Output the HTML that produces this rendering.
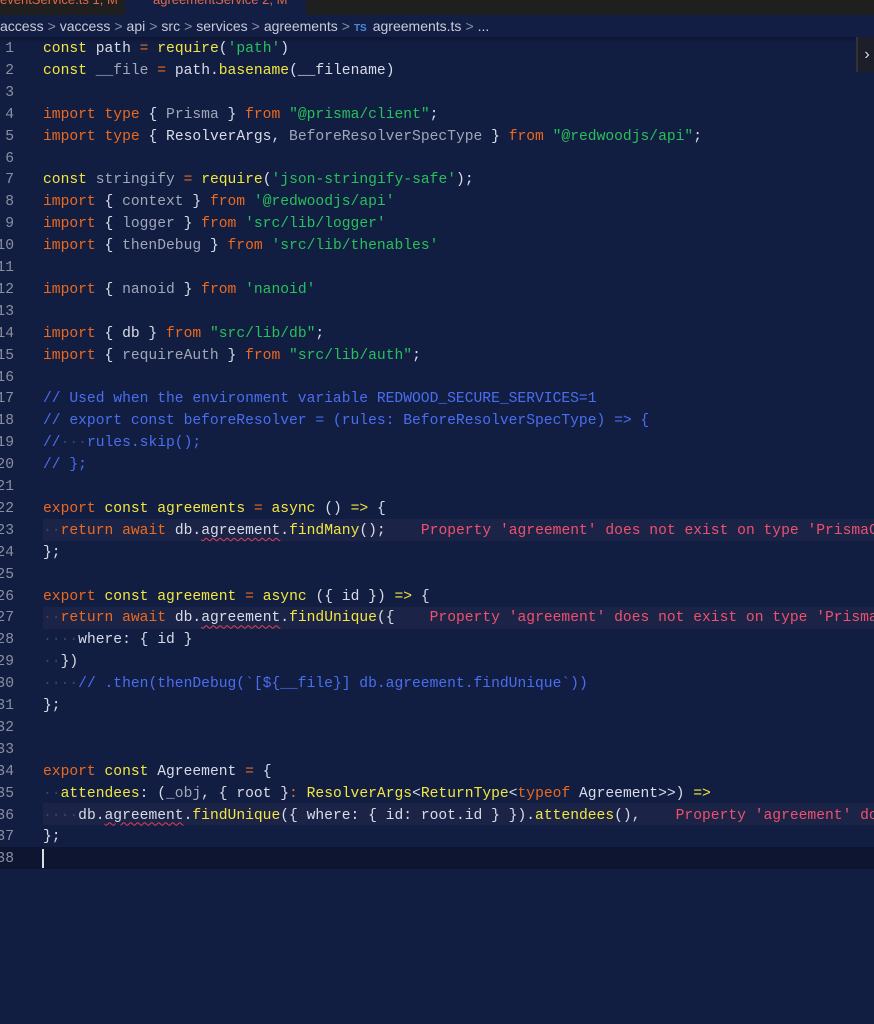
<!DOCTYPE html>
<html><head><meta charset="utf-8"><style>
html,body{margin:0;padding:0;width:874px;height:1024px;overflow:hidden;background:#121d42;}
.tabs{position:absolute;left:0;top:0;width:874px;height:15px;background:#1f1f1f;overflow:hidden;}
.tab{position:absolute;left:125px;top:0;width:181px;height:15px;background:#131e45;}
.t1{position:absolute;left:0;top:-8px;font:13px "Liberation Sans",sans-serif;color:#e06a4a;}
.t2{position:absolute;left:153px;top:-8px;font:13px "Liberation Sans",sans-serif;color:#e06a4a;}
.bc{position:absolute;left:0;top:15px;width:874px;height:22px;background:#131e45;box-shadow:0 2px 3px rgba(0,0,0,.35);font:14px "Liberation Sans",sans-serif;color:#c8ccd6;line-height:22px;white-space:nowrap;overflow:hidden;}
.bc .s{color:#8b91a3;margin:0 4px;}
.bc .ts{color:#4a8cd8;font-size:10px;font-weight:bold;margin-right:6px;}
.wrap{position:absolute;left:0;top:0;width:874px;height:1024px;overflow:hidden;}
.code{position:absolute;left:0;top:39px;font:14.65px/21.9px "Liberation Mono",monospace;color:#d8dce6;white-space:pre;}
.ln{position:absolute;left:-12px;width:26px;text-align:right;color:#8a90a0;}
.l{position:absolute;left:43px;height:21.9px;}
.k{color:#f2e640}.o{color:#ec6a1e}.s{color:#27c05a}.c{color:#4a6ef0}.g{color:#a0a8b8}.w{color:#e6e8ee}.e{color:#f0506e}
.sq{text-decoration:underline wavy #e0405a;text-decoration-thickness:1px;text-underline-offset:3px}
.hl{position:absolute;left:43px;width:831px;height:21.9px;background:#1b2447;}
.cur{position:absolute;left:0;width:874px;height:21.9px;background:#0d1530;}
.scr{position:absolute;left:856px;top:37px;width:18px;height:35px;background:#1c1f2a;border-left:2px solid #333;color:#ddd;font:16px "Liberation Sans",sans-serif;text-align:center;line-height:35px;}
.ig{color:#3a4466}
</style></head><body>
<div class="tabs"><div class="t1">eventService.ts 1, M</div><div class="tab"></div><div class="t2">agreementService 2, M</div></div>
<div class="bc">access<span class="s">&gt;</span>vaccess<span class="s">&gt;</span>api<span class="s">&gt;</span>src<span class="s">&gt;</span>services<span class="s">&gt;</span>agreements<span class="s">&gt;</span><span class="ts">TS</span>agreements.ts<span class="s">&gt;</span>...</div>
<div class="hl" style="top:519px"></div>
<div class="hl" style="top:607px"></div>
<div class="hl" style="top:803px"></div>
<div class="cur" style="top:847px"></div>
<div style="position:absolute;left:42px;top:849px;width:2px;height:19px;background:#d8dce6"></div>
<div class="wrap"><div class="code" id="c"></div></div>
<div class="scr">›</div>
<script>
var L=[
'<span class="k">const</span> path <span class="o">=</span> <span class="k">require</span>(<span class="s">\'path\'</span>)',
'<span class="k">const</span> <span class="g">__file</span> <span class="o">=</span> path.<span class="k">basename</span>(__filename)',
'',
'<span class="o">import</span> <span class="o">type</span> { <span class="g">Prisma</span> } <span class="o">from</span> <span class="s">"@prisma/client"</span>;',
'<span class="o">import</span> <span class="o">type</span> { ResolverArgs, <span class="g">BeforeResolverSpecType</span> } <span class="o">from</span> <span class="s">"@redwoodjs/api"</span>;',
'',
'<span class="k">const</span> <span class="g">stringify</span> <span class="o">=</span> <span class="k">require</span>(<span class="s">\'json-stringify-safe\'</span>);',
'<span class="o">import</span> { <span class="g">context</span> } <span class="o">from</span> <span class="s">\'@redwoodjs/api\'</span>',
'<span class="o">import</span> { <span class="g">logger</span> } <span class="o">from</span> <span class="s">\'src/lib/logger\'</span>',
'<span class="o">import</span> { <span class="g">thenDebug</span> } <span class="o">from</span> <span class="s">\'src/lib/thenables\'</span>',
'',
'<span class="o">import</span> { <span class="g">nanoid</span> } <span class="o">from</span> <span class="s">\'nanoid\'</span>',
'',
'<span class="o">import</span> { db } <span class="o">from</span> <span class="s">"src/lib/db"</span>;',
'<span class="o">import</span> { <span class="g">requireAuth</span> } <span class="o">from</span> <span class="s">"src/lib/auth"</span>;',
'',
'<span class="c">// Used when the environment variable REDWOOD_SECURE_SERVICES=1</span>',
'<span class="c">// export const beforeResolver = (rules: BeforeResolverSpecType) =&gt; {</span>',
'<span class="c">//<span class="ig">···</span>rules.skip();</span>',
'<span class="c">// };</span>',
'',
'<span class="o">export</span> <span class="k">const</span> <span class="k">agreements</span> <span class="o">=</span> <span class="k">async</span> () <span class="k">=&gt;</span> {',
'<span class="ig">··</span><span class="o">return</span> <span class="o">await</span> db.<span class="sq">agreement</span>.<span class="k">findMany</span>();    <span class="e">Property \'agreement\' does not exist on type \'PrismaClient\'</span>',
'};',
'',
'<span class="o">export</span> <span class="k">const</span> <span class="k">agreement</span> <span class="o">=</span> <span class="k">async</span> ({ id }) <span class="k">=&gt;</span> {',
'<span class="ig">··</span><span class="o">return</span> <span class="o">await</span> db.<span class="sq">agreement</span>.<span class="k">findUnique</span>({    <span class="e">Property \'agreement\' does not exist on type \'PrismaClient\'</span>',
'<span class="ig">····</span>where: { id }',
'<span class="ig">··</span>})',
'<span class="ig">····</span><span class="c">// .then(thenDebug(`[${__file}] db.agreement.findUnique`))</span>',
'};',
'',
'',
'<span class="o">export</span> <span class="k">const</span> Agreement <span class="o">=</span> {',
'<span class="ig">··</span><span class="k">attendees</span>: (<span class="g">_obj</span>, { root }<span class="o">:</span> <span class="k">ResolverArgs</span>&lt;<span class="k">ReturnType</span>&lt;<span class="o">typeof</span> Agreement&gt;&gt;) <span class="k">=&gt;</span>',
'<span class="ig">····</span>db.<span class="sq">agreement</span>.<span class="k">findUnique</span>({ where: { id: root.id } }).<span class="k">attendees</span>(),    <span class="e">Property \'agreement\' does not exist</span>',
'};',
''];
var h='';for(var i=0;i<L.length;i++){var t=(i*21.9).toFixed(1);h+='<div class="ln" style="top:'+t+'px">'+(i+1)+'</div><div class="l" style="top:'+t+'px">'+L[i]+'</div>';}
document.getElementById('c').innerHTML=h;
</script>
</body></html>
